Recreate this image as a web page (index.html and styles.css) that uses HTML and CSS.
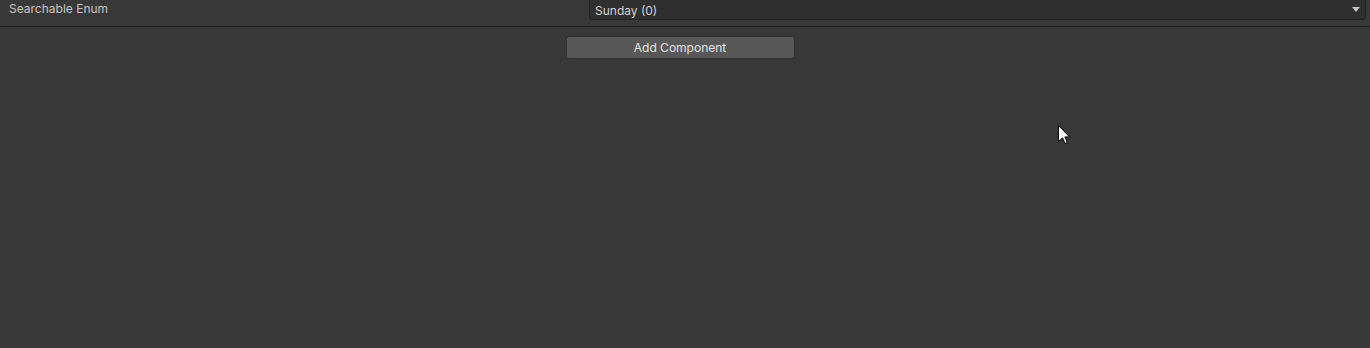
FILE: index.html
```
<!DOCTYPE html>
<html>
<head>
<meta charset="utf-8">
<link rel="stylesheet" href="styles.css">
</head>
<body>
<div class="inspector">
  <div class="prop-row">
    <div class="prop-label">Searchable Enum</div>
    <div class="dropdown">
      <span class="dropdown-value">Sunday (0)</span>
      <svg class="dropdown-arrow" width="8" height="5" viewBox="0 0 8 5"><path d="M0 0H8L4 5Z" fill="#c4c4c4"/></svg>
    </div>
  </div>
  <div class="separator"></div>
  <div class="add-row">
    <button class="add-btn">Add Component</button>
  </div>
</div>
<svg class="cursor" width="12" height="19" viewBox="0 0 12 19">
  <path d="M0.5 0.5V16.5L4.5 12.8L7 18.5L9.3 17.5L6.9 11.9H11.5Z" fill="#ffffff" stroke="#000000" stroke-width="1" stroke-linejoin="miter"/>
</svg>
</body>
</html>
```
FILE: styles.css
```
html, body {
  margin: 0;
  padding: 0;
  background: #383838;
  height: 100%;
  overflow: hidden;
}
body {
  font-family: Inter, "Noto Sans", sans-serif;
  font-size: 12px;
  position: relative;
}
.prop-row {
  display: flex;
  align-items: flex-start;
  height: 26px;
}
.prop-label {
  width: 580px;
  padding-left: 9px;
  color: #c4c4c4;
  line-height: 17px;
  flex: none;
}
.dropdown {
  flex: 1;
  margin-right: 4px;
  height: 20px;
  box-sizing: border-box;
  background: #2f2f2f;
  border: 1px solid #212121;
  border-top: none;
  border-radius: 0 0 3px 3px;
  display: flex;
  align-items: center;
  justify-content: space-between;
  padding: 2px 4px 0 5px;
  color: #d2d2d2;
}
.dropdown-value {
  line-height: 18px;
}
.dropdown-arrow {
  margin-right: 1px;
  margin-top: -2px;
}
.separator {
  height: 1px;
  background: #1c1c1c;
}
.add-row {
  display: flex;
  justify-content: center;
  padding-right: 10px;
  padding-top: 9px;
}
.add-btn {
  width: 229px;
  height: 23px;
  box-sizing: border-box;
  background: #585858;
  border: 1px solid #303030;
  border-radius: 3px;
  color: #e4e4e4;
  font-family: Inter, "Noto Sans", sans-serif;
  font-size: 12px;
  padding: 0 0 1px 0;
  line-height: 19px;
}
.cursor {
  position: absolute;
  left: 1058px;
  top: 125px;
}
```
